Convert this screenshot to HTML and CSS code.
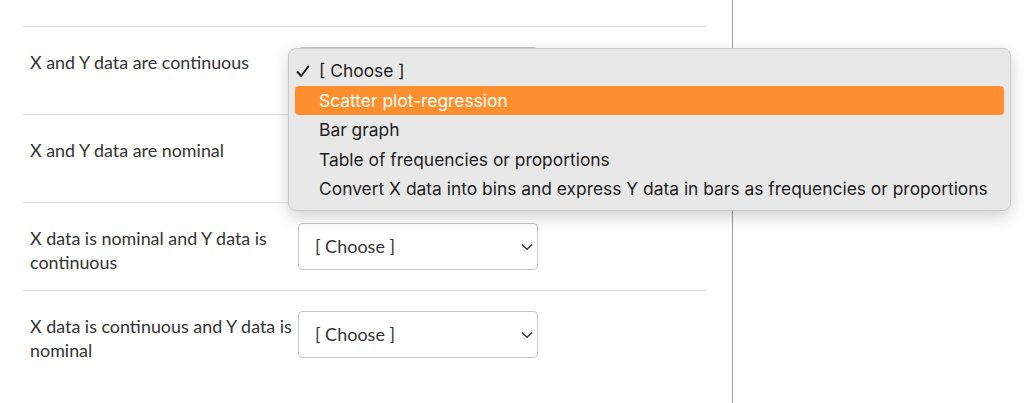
FILE: index.html
```html
<!DOCTYPE html>
<html lang="en">
<head>
  <meta charset="UTF-8" />
  <title>Matching question</title>
  <link rel="stylesheet" href="styles.css">
</head>
<body>
  <div class="page">
    <div class="question">
      <div class="answer-row">
        <div class="answer-label">X and Y data are continuous</div>
        <div class="select">
          <span>[ Choose ]</span>
          <svg width="12" height="8" viewBox="0 0 12 8"><path d="M1 1.5 L6 6.3 L11 1.5" fill="none" stroke="#333" stroke-width="1.3"/></svg>
        </div>
      </div>
      <div class="answer-row">
        <div class="answer-label">X and Y data are nominal</div>
        <div class="select">
          <span>[ Choose ]</span>
          <svg width="12" height="8" viewBox="0 0 12 8"><path d="M1 1.5 L6 6.3 L11 1.5" fill="none" stroke="#333" stroke-width="1.3"/></svg>
        </div>
      </div>
      <div class="answer-row">
        <div class="answer-label">X data is nominal and Y data is continuous</div>
        <div class="select">
          <span>[ Choose ]</span>
          <svg width="12" height="8" viewBox="0 0 12 8"><path d="M1 1.5 L6 6.3 L11 1.5" fill="none" stroke="#333" stroke-width="1.3"/></svg>
        </div>
      </div>
      <div class="answer-row">
        <div class="answer-label">X data is continuous and Y data is nominal</div>
        <div class="select">
          <span>[ Choose ]</span>
          <svg width="12" height="8" viewBox="0 0 12 8"><path d="M1 1.5 L6 6.3 L11 1.5" fill="none" stroke="#333" stroke-width="1.3"/></svg>
        </div>
      </div>
    </div>
    <div class="side"></div>
  </div>

  <!-- open native menu of the first select -->
  <ul class="menu">
    <li><svg class="check" width="14" height="13" viewBox="0 0 14 13"><path d="M1.5 7 L5.2 11 L12.3 1.5" fill="none" stroke="#1e1e1e" stroke-width="2" stroke-linecap="round" stroke-linejoin="round"/></svg>[ Choose ]</li>
    <li class="active">Scatter plot-regression</li>
    <li>Bar graph</li>
    <li>Table of frequencies or proportions</li>
    <li>Convert X data into bins and express Y data in bars as frequencies or proportions</li>
  </ul>
</body>
</html>
```

FILE: styles.css
```css
body {
  margin: 0;
  background: #fff;
  font-family: Lato, "Open Sans", sans-serif;
  color: #333;
}
.page {
  display: flex;
  height: 403px;
  overflow: hidden;
}
.question {
  width: 683px;
  margin-left: 23px;
  padding-top: 26px;
}
.side {
  margin-left: 26px;
  border-left: 1px solid #9a9a9a;
  flex: 1;
}
.answer-row {
  display: flex;
  align-items: flex-start;
  height: 88px;
  box-sizing: border-box;
  border-top: 1px solid #dcdcdc;
  padding: 20px 0;
}
.answer-label {
  width: 275px;
  flex-shrink: 0;
  padding: 3px 0 0 7px;
  box-sizing: border-box;
  font-size: 17.9px;
  line-height: 24px;
}
.select {
  width: 240px;
  height: 47px;
  flex-shrink: 0;
  box-sizing: border-box;
  border: 1px solid #c4c7ca;
  border-radius: 4px;
  display: flex;
  align-items: center;
  justify-content: space-between;
  padding: 0 4px 0 16px;
  font-size: 18px;
  color: #333;
  background: #fff;
}
.select span {
  margin-top: -1px;
}
.menu {
  position: absolute;
  left: 288px;
  top: 48px;
  width: 723px;
  margin: 0;
  padding: 7px 6px 6px;
  box-sizing: border-box;
  list-style: none;
  background: #e8e8e8;
  border: 1px solid #c9c9c9;
  border-radius: 8px;
  box-shadow: 0 6px 16px rgba(0, 0, 0, 0.18);
  font-family: Inter, "Noto Sans", sans-serif;
  font-size: 17.4px;
  color: #1e1e1e;
}
.menu li {
  height: 29.5px;
  line-height: 29.5px;
  padding-left: 24px;
  border-radius: 4px;
  position: relative;
  white-space: nowrap;
}
.menu li.active {
  background: #fd8f2f;
  color: #fff;
}
.menu .check {
  position: absolute;
  left: 1px;
  top: 9px;
}
```
